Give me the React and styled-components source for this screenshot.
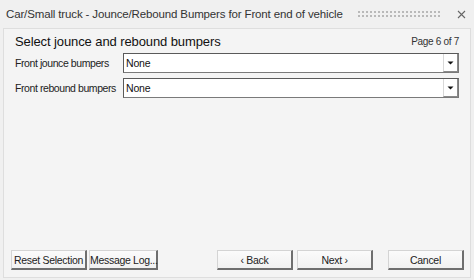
import React from "react";
import styled, { createGlobalStyle } from "styled-components";

const Global = createGlobalStyle`
  html, body {
    margin: 0;
    padding: 0;
    background: #f0f0f0;
  }
  * { box-sizing: border-box; }
`;

const Window = styled.div`
  width: 474px;
  height: 280px;
  display: flex;
  flex-direction: column;
  background: #f0f0f0;
  font-family: "Liberation Sans", Arial, sans-serif;
  color: #1a1a1a;
  overflow: hidden;
`;

const TitleBar = styled.div`
  height: 28px;
  flex: none;
  display: flex;
  align-items: center;
  padding: 0 8px 0 6px;
  gap: 10px;
`;

const TitleText = styled.span`
  font-size: 11.5px;
  letter-spacing: -0.14px;
  color: #333;
  white-space: nowrap;
`;

const Grip = styled.span`
  flex: 1;
  height: 6px;
  margin-left: 4px;
  background-image: radial-gradient(circle, #9a9a9a 0.6px, transparent 0.9px);
  background-size: 4px 4px;
  background-position: 0 -1px;
`;

const CloseButton = styled.span`
  width: 10px;
  height: 10px;
  display: flex;
  align-items: center;
  justify-content: center;
  margin-left: 4px;
`;

const Panel = styled.div`
  flex: 1;
  display: flex;
  flex-direction: column;
  margin: 0 3px 2px;
  background: #f4f4f4;
  border: 1px solid #dedede;
`;

const Header = styled.div`
  display: flex;
  align-items: center;
  justify-content: space-between;
  height: 22px;
  padding: 3px 11px 0 11px;
`;

const Heading = styled.h1`
  margin: 0;
  font-size: 13px;
  font-weight: normal;
  color: #111;
  letter-spacing: -0.1px;
`;

const PageInfo = styled.span`
  font-size: 10px;
  color: #333;
  letter-spacing: -0.3px;
`;

const Form = styled.div`
  display: grid;
  grid-template-columns: 108px 1fr;
  row-gap: 5px;
  align-items: center;
  padding: 2px 11px 0;
`;

const Label = styled.span`
  font-size: 10.5px;
  color: #222;
  letter-spacing: -0.42px;
  white-space: nowrap;
`;

const Combo = styled.div`
  height: 20px;
  display: flex;
  align-items: stretch;
  background: #fff;
  border: 1px solid #7a7a7a;
  border-top-color: #5a5a5a;
  border-left-color: #5a5a5a;
`;

const ComboValue = styled.span`
  flex: 1;
  display: flex;
  align-items: center;
  padding-left: 2px;
  font-size: 10.5px;
  letter-spacing: -0.2px;
  color: #111;
`;

const ComboArrow = styled.span`
  width: 15px;
  display: flex;
  align-items: center;
  justify-content: center;
  background: #fff;
  border-left: 1px solid #d8d8d8;
  border-right: 1px solid #8a8a8a;
  border-bottom: 1px solid #8a8a8a;
`;

const Spacer = styled.div`
  flex: 1;
`;

const Footer = styled.div`
  display: flex;
  align-items: center;
  padding: 0 6px 7px 7px;
`;

const Group = styled.div`
  display: flex;
  gap: ${(p) => p.$gap}px;
`;

const Button = styled.button`
  width: ${(p) => p.$w}px;
  height: 20px;
  margin-left: ${(p) => p.$ml || 0}px;
  padding: 0;
  font-family: "Liberation Sans", Arial, sans-serif;
  font-size: 10.5px;
  letter-spacing: -0.3px;
  white-space: nowrap;
  color: #222;
  background: linear-gradient(#fbfbfb, #f1f1f1);
  border: 1px solid #d4d4d4;
  border-right: 2px solid #6e6e6e;
  border-bottom: 2px solid #6e6e6e;
`;

const Arrow = () => (
  <svg width="7" height="4" viewBox="0 0 7 4">
    <path d="M0.5 0.5 L6.5 0.5 L3.5 3.5 Z" fill="#111" />
  </svg>
);

const rows = [
  { label: "Front jounce bumpers", value: "None" },
  { label: "Front rebound bumpers", value: "None" },
];

export default function App() {
  return (
    <Window>
      <Global />
      <TitleBar>
        <TitleText>Car/Small truck - Jounce/Rebound Bumpers for Front end of vehicle</TitleText>
        <Grip />
        <CloseButton>
          <svg width="9" height="9" viewBox="0 0 9 9">
            <path d="M1 1 L8 8 M8 1 L1 8" stroke="#666" strokeWidth="1.1" />
          </svg>
        </CloseButton>
      </TitleBar>
      <Panel>
        <Header>
          <Heading>Select jounce and rebound bumpers</Heading>
          <PageInfo>Page 6 of 7</PageInfo>
        </Header>
        <Form>
          {rows.map((r) => (
            <React.Fragment key={r.label}>
              <Label>{r.label}</Label>
              <Combo>
                <ComboValue>{r.value}</ComboValue>
                <ComboArrow>
                  <Arrow />
                </ComboArrow>
              </Combo>
            </React.Fragment>
          ))}
        </Form>
        <Spacer />
        <Footer>
          <Group $gap={2}>
            <Button $w={76}>Reset Selection</Button>
            <Button $w={69}>Message Log...</Button>
          </Group>
          <Spacer />
          <Group $gap={4}>
            <Button $w={76}>&lsaquo; Back</Button>
            <Button $w={76}>Next &rsaquo;</Button>
            <Button $w={76} $ml={11}>Cancel</Button>
          </Group>
        </Footer>
      </Panel>
    </Window>
  );
}
